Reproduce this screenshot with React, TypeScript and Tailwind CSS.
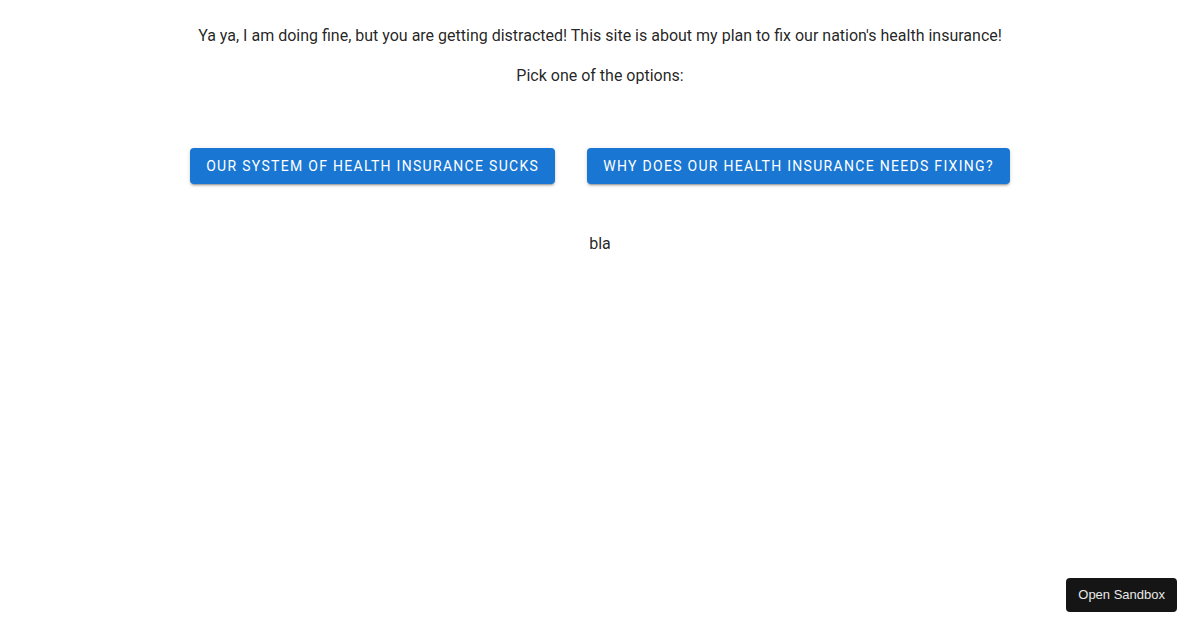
export default function App() {
  return (
    <div className="min-h-[630px] bg-white font-['Roboto',sans-serif] text-[16px] leading-6 text-[rgba(0,0,0,0.87)]">
      <div className="flex flex-col items-center pt-6">
        <p>Ya ya, I am doing fine, but you are getting distracted! This site is about my plan to fix our nation's health insurance!</p>
        <p className="mt-4">Pick one of the options:</p>
        <div className="mt-[60px] flex gap-8">
          {['Our system of health insurance sucks', 'Why does our health insurance needs fixing?'].map((label) => (
            <button
              key={label}
              className="h-9 rounded bg-[#1976d2] px-4 text-[14px] font-normal uppercase tracking-[1.3px] text-white shadow-[0px_3px_1px_-2px_rgba(0,0,0,0.2),0px_2px_2px_0px_rgba(0,0,0,0.14),0px_1px_5px_0px_rgba(0,0,0,0.12)]"
            >
              {label}
            </button>
          ))}
        </div>
        <p className="mt-12">bla</p>
      </div>
      <button className="fixed bottom-[18px] right-[23px] h-[34px] rounded-[4px] bg-[#151515] px-3 font-['Liberation_Sans',sans-serif] text-[13px] text-[#e8e8e8]">
        Open Sandbox
      </button>
    </div>
  )
}
